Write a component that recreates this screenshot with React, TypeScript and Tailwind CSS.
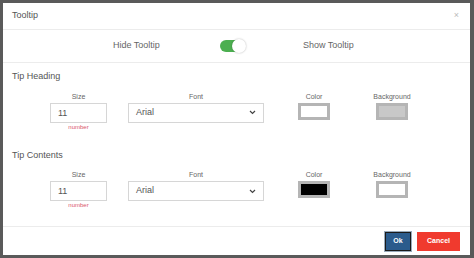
import React, { useState } from "react";

const Swatch = ({ fill }: { fill: string }) => (
  <div className="w-[32px] h-[17px] bg-[#b5b5b5] p-[3px]">
    <div className={`w-full h-full ${fill}`} />
  </div>
);

const Section = ({
  title,
  color,
  background,
}: {
  title: string;
  color: string;
  background: string;
}) => (
  <div className="px-[9px] pt-[7px] pb-[11px]">
    <div className="text-[9px] text-[#555]">{title}</div>
    <div className="flex items-start mt-[8px]">
      <div className="ml-[38px] w-[57px] flex flex-col items-center">
        <div className="text-[7px] text-[#666] leading-[9px]">Size</div>
        <input
          defaultValue="11"
          className="mt-[2px] w-[57px] h-[20px] border border-[#d6d6d6] px-[7px] text-[9px] text-[#555] outline-none"
        />
        <div className="text-[6px] text-[#d9536b] leading-[8px]">number</div>
      </div>
      <div className="ml-[21px] w-[136px] flex flex-col items-center">
        <div className="text-[7px] text-[#666] leading-[9px]">Font</div>
        <div className="mt-[2px] w-[136px] h-[20px] border border-[#d6d6d6] flex items-center justify-between px-[7px]">
          <span className="text-[9px] text-[#555]">Arial</span>
          <svg width="7" height="5" viewBox="0 0 7 5">
            <path d="M1 1 L3.5 3.5 L6 1" fill="none" stroke="#444" strokeWidth="1.2" />
          </svg>
        </div>
      </div>
      <div className="ml-[34px] w-[32px] flex flex-col items-center">
        <div className="text-[7px] text-[#666] leading-[9px]">Color</div>
        <div className="mt-[2px]">
          <Swatch fill={color} />
        </div>
      </div>
      <div className="ml-[46px] w-[32px] flex flex-col items-center">
        <div className="text-[7px] text-[#666] leading-[9px] whitespace-nowrap">Background</div>
        <div className="mt-[2px]">
          <Swatch fill={background} />
        </div>
      </div>
    </div>
  </div>
);

export default function App() {
  const [on, setOn] = useState(true);
  return (
    <div
      className="w-[474px] h-[258px] bg-[#5a5a5a] pt-[3px] pl-[3px] overflow-hidden"
      style={{ fontFamily: "'Liberation Sans', Arial, sans-serif" }}
    >
      <div className="w-[467px] h-[252px] bg-white flex flex-col">
        <div className="h-[27px] flex items-center justify-between px-[9px] border-b border-[#ececec]">
          <span className="text-[9px] text-[#555]">Tooltip</span>
          <span className="text-[9px] text-[#bbb] mr-[2px]">×</span>
        </div>
        <div className="h-[33px] flex items-center border-b border-[#ececec]">
          <span className="ml-[110px] text-[9px] text-[#666]">Hide Tooltip</span>
          <button
            onClick={() => setOn(!on)}
            className="ml-[60px] w-[25px] h-[12px] rounded-full bg-[#4caf50] relative"
          >
            <span className="absolute right-[-1px] top-[-1px] w-[14px] h-[14px] rounded-full bg-white shadow-[0_0_2px_rgba(0,0,0,0.3)]" />
          </button>
          <span className="ml-[58px] text-[9px] text-[#666]">Show Tooltip</span>
        </div>
        <Section title="Tip Heading" color="bg-white" background="bg-[#c8c8c8]" />
        <Section title="Tip Contents" color="bg-black" background="bg-white" />
        <div className="mt-auto h-[29px] border-t border-[#ececec] flex items-center justify-end pr-[10px] gap-[6px]">
          <button className="w-[26px] h-[19px] bg-[#2b5b8c] border border-[#1a1a1a] outline outline-1 outline-[#9ab] text-white text-[7px] font-bold">
            Ok
          </button>
          <button className="w-[43px] h-[19px] bg-[#f03a2e] text-white text-[7px] font-bold">
            Cancel
          </button>
        </div>
      </div>
    </div>
  );
}
